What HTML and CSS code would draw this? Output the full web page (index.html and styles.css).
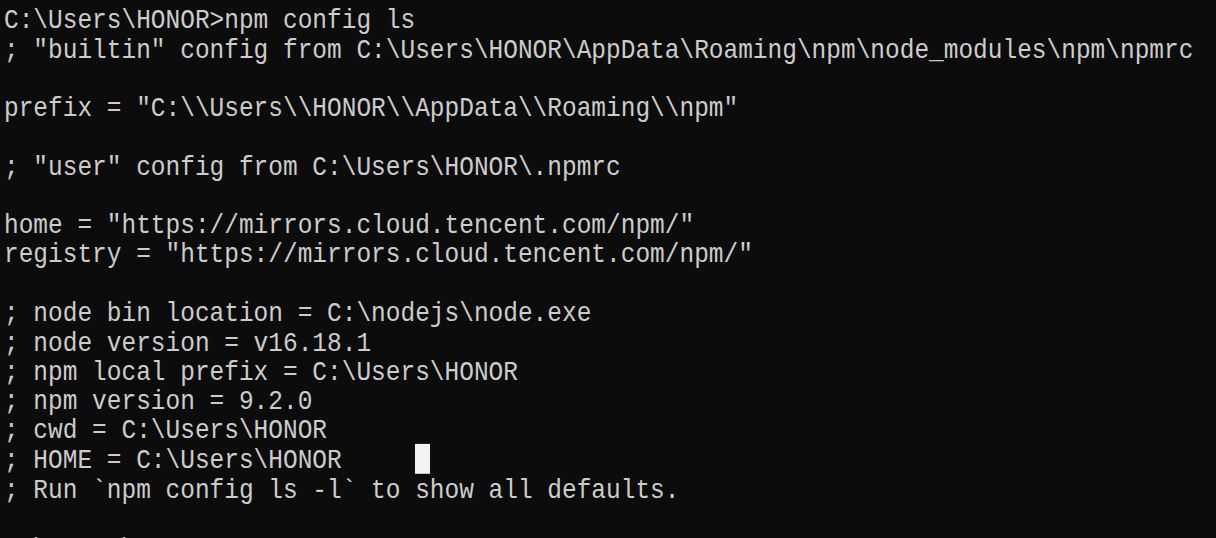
FILE: index.html
```html
<!DOCTYPE html>
<html lang="en">
<head>
    <meta charset="UTF-8">
    <meta name="viewport" content="width=device-width, initial-scale=1.0">
    <title>Command Prompt</title>
    <link rel="stylesheet" href="styles.css">
</head>
<body>
    <div class="console">
        <pre class="output">C:\Users\HONOR&gt;npm config ls
; "builtin" config from C:\Users\HONOR\AppData\Roaming\npm\node_modules\npm\npmrc

prefix = "C:\\Users\\HONOR\\AppData\\Roaming\\npm"

; "user" config from C:\Users\HONOR\.npmrc

home = "https://mirrors.cloud.tencent.com/npm/"
registry = "https://mirrors.cloud.tencent.com/npm/"

; node bin location = C:\nodejs\node.exe
; node version = v16.18.1
; npm local prefix = C:\Users\HONOR
; npm version = 9.2.0
; cwd = C:\Users\HONOR
; HOME = C:\Users\HONOR     <span class="cursor"></span>
; Run `npm config ls -l` to show all defaults.

C:\Users\HONOR&gt;</pre>
    </div>
</body>
</html>
```

FILE: styles.css
```css
body {
    margin: 0;
    background-color: #0c0c0c;
    overflow: hidden;
}

.console {
    width: 1216px;
    height: 538px;
    overflow: hidden;
}

.output {
    margin: 0;
    padding: 5px 0 0 4px;
    font-family: "Liberation Mono", "DejaVu Sans Mono", monospace;
    font-size: 24.47px;
    line-height: 25.5px;
    color: #cccccc;
    transform: scaleY(1.15);
    transform-origin: 0 0;
}

.cursor {
    display: inline-block;
    position: relative;
    top: -2px;
    width: 15px;
    height: 26px;
    vertical-align: top;
    background-color: #f2f2f2;
}
```
